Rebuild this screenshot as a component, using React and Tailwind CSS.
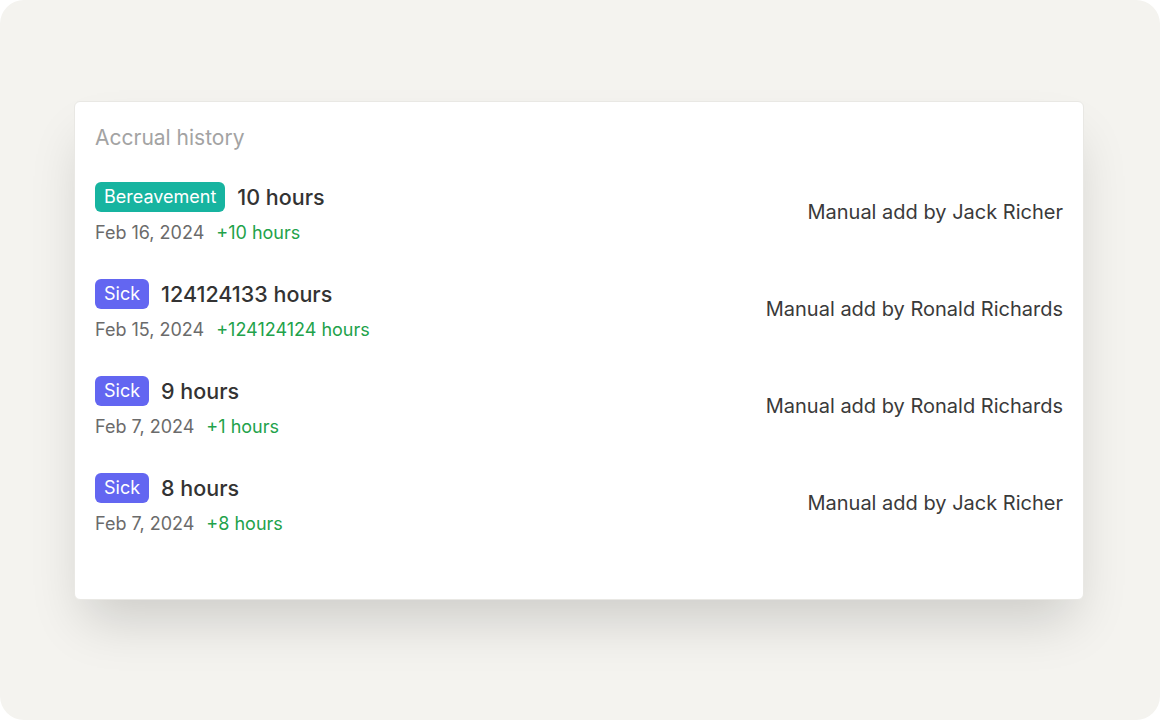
const rows = [
  { type: 'Bereavement', color: 'bg-[#17b4a0]', total: '10 hours', date: 'Feb 16, 2024', delta: '+10 hours', by: 'Manual add by Jack Richer' },
  { type: 'Sick', color: 'bg-[#6366f1]', total: '124124133 hours', date: 'Feb 15, 2024', delta: '+124124124 hours', by: 'Manual add by Ronald Richards' },
  { type: 'Sick', color: 'bg-[#6366f1]', total: '9 hours', date: 'Feb 7, 2024', delta: '+1 hours', by: 'Manual add by Ronald Richards' },
  { type: 'Sick', color: 'bg-[#6366f1]', total: '8 hours', date: 'Feb 7, 2024', delta: '+8 hours', by: 'Manual add by Jack Richer' },
];

export default function App() {
  return (
    <div className="w-[1160px] h-[720px] bg-white" style={{ fontFamily: 'Inter, "Noto Sans", sans-serif' }}>
      <div className="w-full h-full rounded-[24px] bg-[#f4f3ef] pt-[101px] pl-[74px] pr-[76px]">
        <div className="bg-white rounded-[6px] border border-[#e9e8e4] h-[499px] px-5 pt-[22px] shadow-[0_30px_50px_-10px_rgba(0,0,0,0.16)]">
          <h2 className="text-[21px] leading-7 text-[#a3a3a3]">Accrual history</h2>
          <div className="mt-[30px] flex flex-col gap-[33px]">
            {rows.map((r, i) => (
              <div key={i} className="flex items-center justify-between">
                <div>
                  <div className="flex items-center gap-3 h-[30px]">
                    <span className={`${r.color} text-white text-[18px] leading-[30px] px-[9px] rounded-[6px]`}>{r.type}</span>
                    <span className="text-[21.5px] font-medium text-[#333]">{r.total}</span>
                  </div>
                  <div className="mt-[8px] flex items-center gap-3 text-[18px] leading-[26px]">
                    <span className="text-[#6b6b6b]">{r.date}</span>
                    <span className="text-[#22a24a]">{r.delta}</span>
                  </div>
                </div>
                <div className="text-[20px] text-[#3a3a3a] -mt-[5px]">{r.by}</div>
              </div>
            ))}
          </div>
        </div>
      </div>
    </div>
  );
}
